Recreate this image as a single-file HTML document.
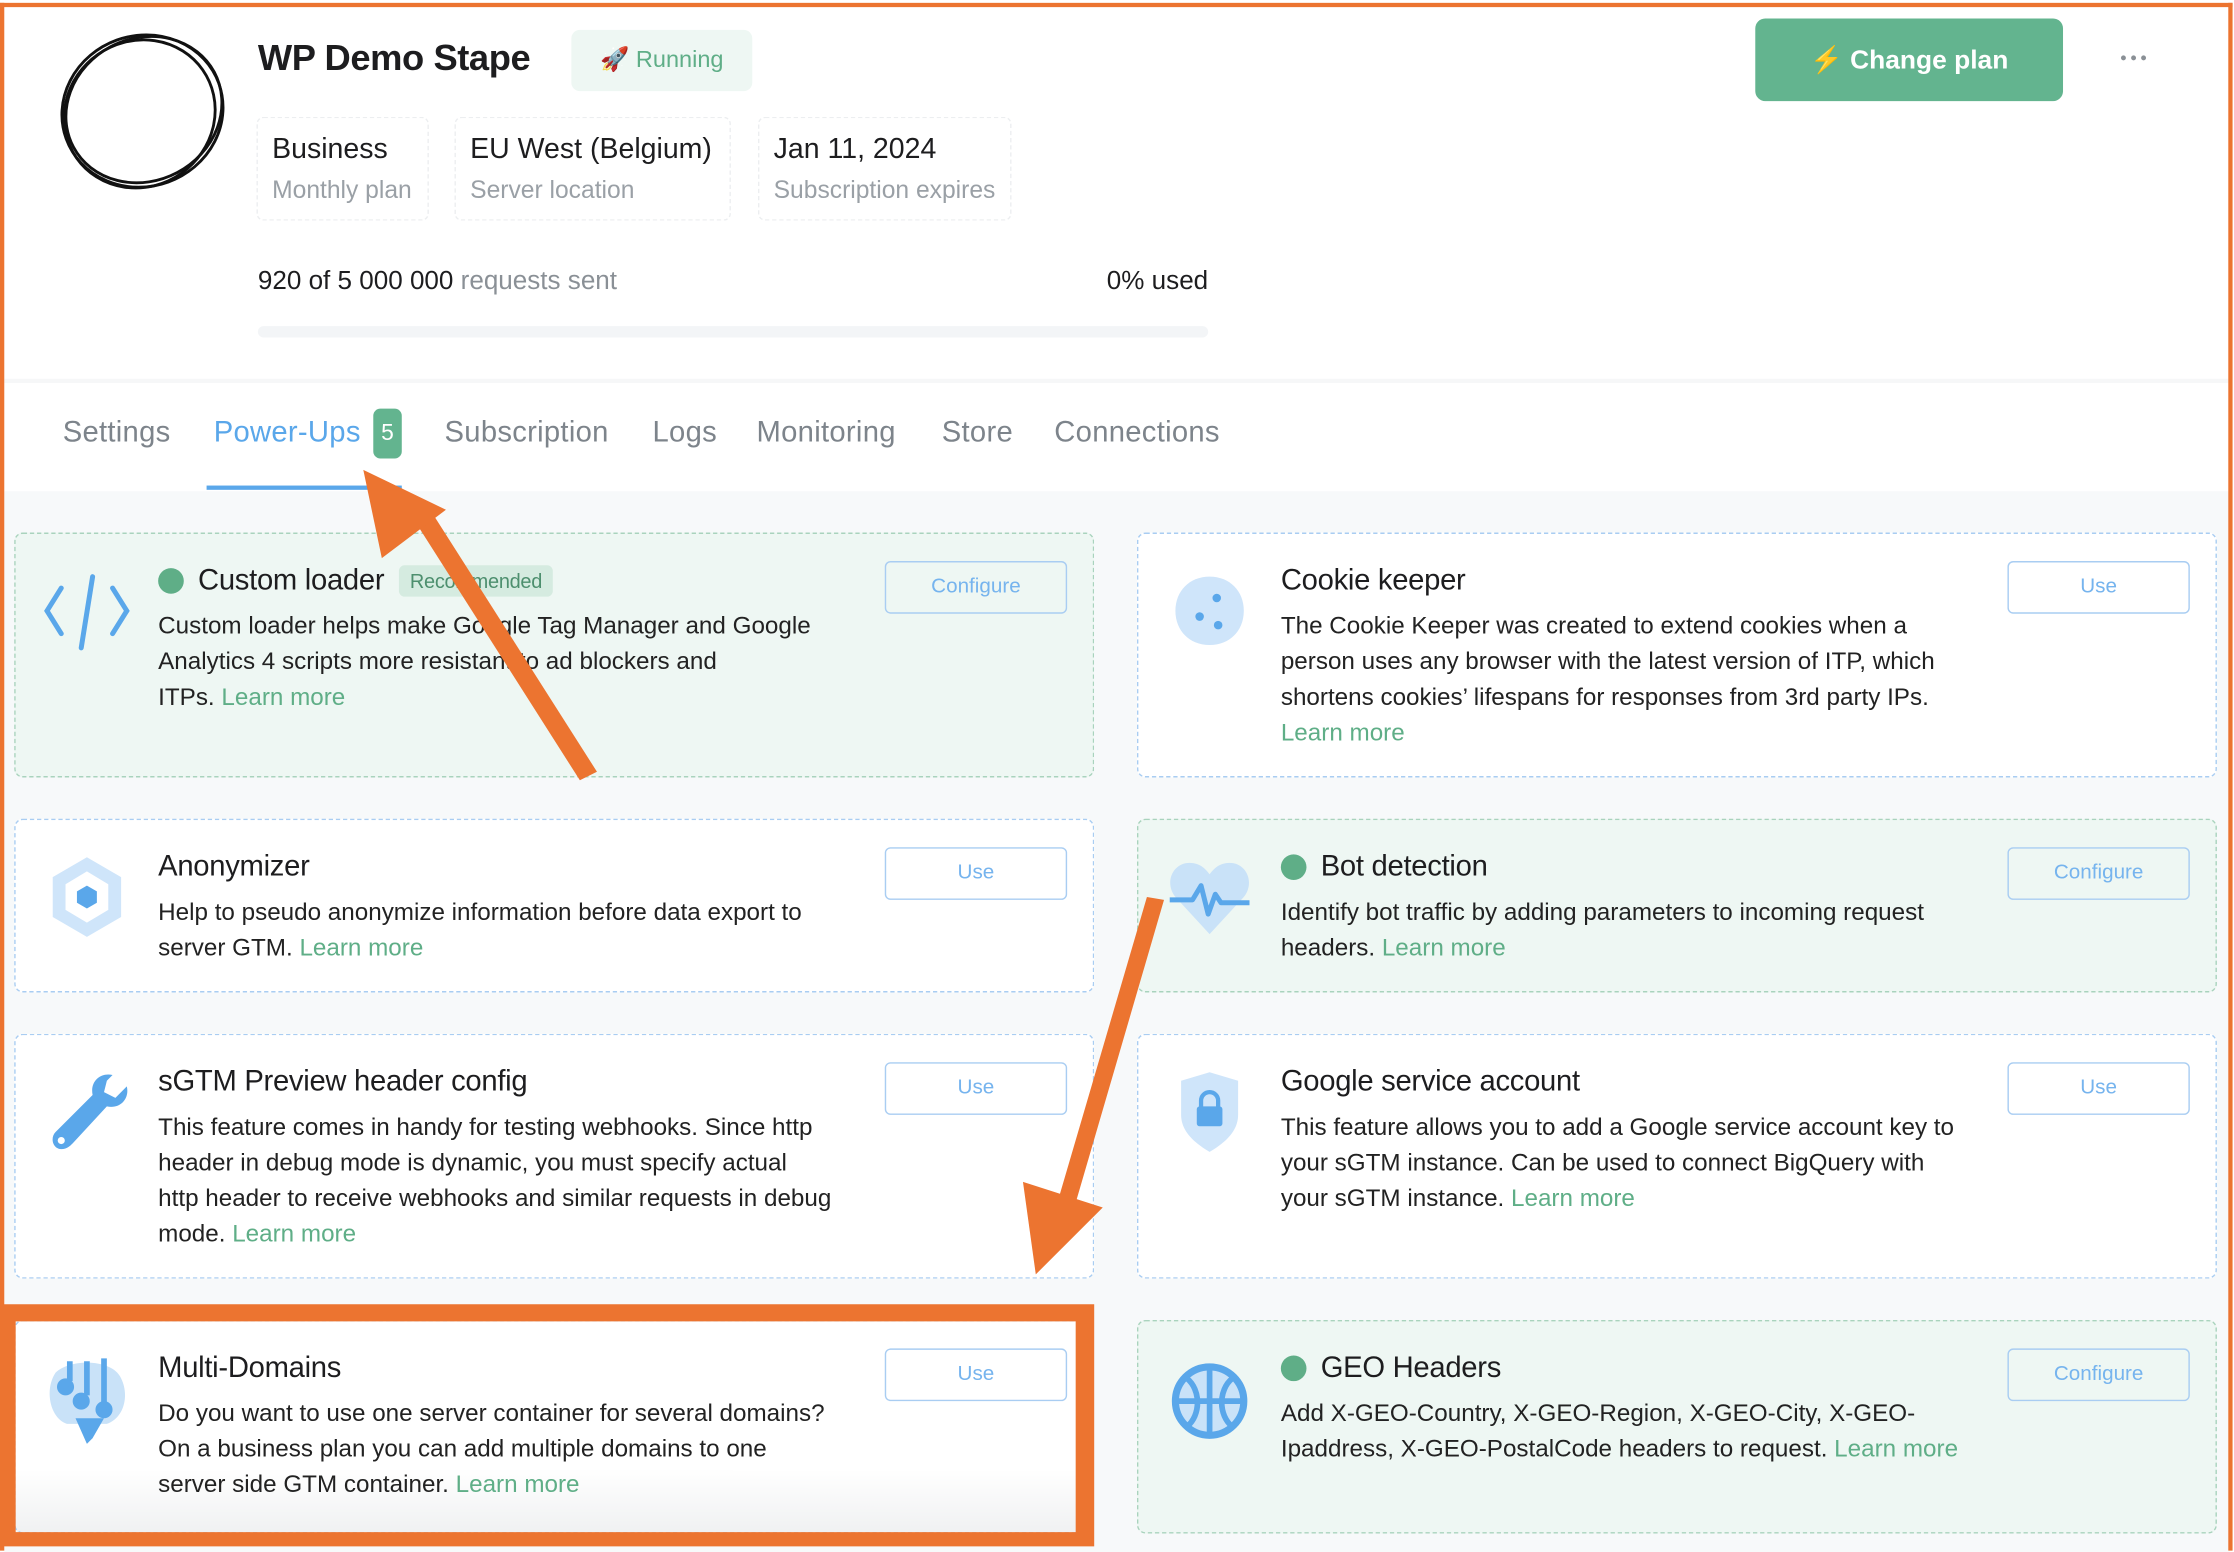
<!DOCTYPE html>
<html><head><meta charset="utf-8">
<style>
*{box-sizing:border-box;margin:0;padding:0}
html,body{width:2234px;height:1552px;overflow:hidden;background:#fff}
#w{position:absolute;left:0;top:0;width:1568px;height:1090px;transform:scale(1.42474,1.4239);transform-origin:0 0;font-family:"Liberation Sans",sans-serif;color:#1d1d1f;background:#fff}
.a{position:absolute}
.frame{position:absolute;left:0;top:2px;width:1567px;height:1087px;border:3px solid #ec7430;border-bottom:none;pointer-events:none}
.title{left:181px;top:27px;font-size:25.5px;font-weight:bold;letter-spacing:-0.3px}
.run{left:401px;top:21px;width:127px;height:43px;background:#eef7f3;border-radius:6px;color:#5fae87;font-size:16.5px;line-height:43px;text-align:center}
.ib{top:82px;height:73px;border:1px dashed #eceef0;border-radius:5px;padding:11px 10px}
.ib b{display:block;font-size:20px;font-weight:normal;color:#1d1d1f}
.ib span{display:block;font-size:17.3px;color:#9aa0a6;margin-top:6px}
.req{left:181px;top:186px;font-size:18.3px}
.req span{color:#8a9096}
.used{left:700px;width:148px;text-align:right;top:186px;font-size:18.3px}
.bar{left:181px;top:229px;width:667px;height:8px;background:#f3f5f7;border-radius:4px}
.cp{left:1232px;top:13px;width:216px;height:58px;background:#63b48f;border-radius:7px;color:#fff;font-weight:bold;font-size:18.5px;line-height:58px;text-align:center}
.dots{left:1488px;top:36px;font-size:8px;color:#8a9096;letter-spacing:0px}
.sep{left:3px;top:266px;width:1562px;height:3px;background:#f6f7f8}
.tab{top:292px;font-size:20.5px;color:#7d848b;letter-spacing:0.2px}
.badge{left:262px;top:287px;width:20px;height:35px;background:#63b48f;border-radius:5px;color:#fff;font-size:16px;text-align:center;line-height:35px}
.ul{left:145px;top:341px;width:137px;height:3px;background:#5aa7ea}
.content{left:3px;top:345px;width:1562px;height:745px;background:#f7f9fa}
.card{position:absolute;width:758px;border-radius:6px;border:1px dashed #a9cdf2;background:#fff}
.card.g{background:#eef7f3;border-color:#a9d3bd}
.card .ic{position:absolute;left:18px;top:22px;width:64px;height:64px}
.card h3{position:absolute;left:100px;top:21px;height:24px;font-size:20.5px;font-weight:normal;display:flex;align-items:center;white-space:nowrap;letter-spacing:-0.2px}
.dot{display:inline-block;width:18px;height:18px;border-radius:50%;background:#5fae87;margin-right:10px}
.rec{display:inline-block;background:#d5ebe0;color:#4d8f6e;font-size:14px;padding:3px 8px;border-radius:4px;margin-left:10px}
.card p{position:absolute;left:100px;top:52px;width:485px;font-size:17px;line-height:25px;color:#222}
.card p i{font-style:normal;color:#5fae87;white-space:nowrap}
.btn{position:absolute;left:610px;top:19px;width:128px;height:37px;border:1.5px solid #a9cdf2;border-radius:4px;color:#76b4ee;font-size:14.5px;text-align:center;line-height:34px;background:transparent}
.obox{position:absolute;left:2px;top:916px;width:766px;height:170px;border-style:solid;border-color:#ec7430;border-width:12px 13px 10px 9px}
</style></head><body><div id="w">
<svg class="a" style="left:38px;top:20px" width="124" height="118" viewBox="0 0 124 118"><g fill="none" stroke="#111" stroke-width="2"><ellipse cx="62" cy="58" rx="57" ry="53" transform="rotate(-20 62 58)"/><ellipse cx="60" cy="60" rx="54" ry="51" transform="rotate(-35 60 60)"/><ellipse cx="63" cy="57" rx="56" ry="50" transform="rotate(-28 63 57)"/></g></svg>
<div class="a title">WP Demo Stape</div>
<div class="a run">🚀 Running</div>
<div class="a ib" style="left:180px;width:121px"><b>Business</b><span>Monthly plan</span></div>
<div class="a ib" style="left:319px;width:194px"><b>EU West (Belgium)</b><span>Server location</span></div>
<div class="a ib" style="left:532px;width:178px"><b>Jan 11, 2024</b><span>Subscription expires</span></div>
<div class="a req">920 of 5 000 000 <span>requests sent</span></div>
<div class="a used">0% used</div>
<div class="a bar"></div>
<div class="a cp"><span style="color:#f2c94c">⚡</span> Change plan</div>
<div class="a dots">● ● ●</div>
<div class="a sep"></div>
<div class="a tab" style="left:44px">Settings</div>
<div class="a tab" style="left:150px;color:#5aa7ea">Power-Ups</div>
<div class="a badge">5</div>
<div class="a tab" style="left:312px">Subscription</div>
<div class="a tab" style="left:458px">Logs</div>
<div class="a tab" style="left:531px">Monitoring</div>
<div class="a tab" style="left:661px">Store</div>
<div class="a tab" style="left:740px">Connections</div>
<div class="a ul"></div>
<div class="a content"></div>

<div class="card g" style="left:10px;top:374px;height:172px">
<svg class="ic" viewBox="0 0 64 64"><g fill="none" stroke="#5aa7ea" stroke-width="3.5" stroke-linecap="round"><path d="M14 16 L4 32 L14 48"/><path d="M50 16 L60 32 L50 48"/><path d="M36 8 L28 58"/></g></svg>
<h3><span class="dot"></span>Custom loader<span class="rec">Recommended</span></h3>
<p>Custom loader helps make Google Tag Manager and Google Analytics 4 scripts more resistant to ad blockers and ITPs.&nbsp;<i>Learn more</i></p>
<div class="btn">Configure</div></div>

<div class="card" style="left:798px;top:374px;height:172px">
<svg class="ic" viewBox="0 0 64 64"><path d="M32 8 C46 8 56 18 56 32 C56 46 46 56 32 56 C18 56 8 46 8 32 C8 18 18 8 32 8Z" fill="#cfe5fa"/><circle cx="37" cy="23" r="3" fill="#5aa7ea"/><circle cx="25" cy="36" r="3" fill="#5aa7ea"/><circle cx="38" cy="42" r="3" fill="#5aa7ea"/></svg>
<h3>Cookie keeper</h3>
<p>The Cookie Keeper was created to extend cookies when a person uses any browser with the latest version of ITP, which shortens cookies’ lifespans for responses from 3rd party IPs. <i>Learn more</i></p>
<div class="btn">Use</div></div>

<div class="card" style="left:10px;top:575px;height:122px">
<svg class="ic" viewBox="0 0 64 64"><path d="M32 4 L56 18 L56 46 L32 60 L8 46 L8 18Z" fill="#cfe5fa"/><path d="M32 14 L47 23 L47 41 L32 50 L17 41 L17 23Z" fill="#fff"/><path d="M32 24 L39 28 L39 36 L32 40 L25 36 L25 28Z" fill="#5aa7ea"/></svg>
<h3>Anonymizer</h3>
<p>Help to pseudo anonymize information before data export to server GTM. <i>Learn more</i></p>
<div class="btn">Use</div></div>

<div class="card g" style="left:798px;top:575px;height:122px">
<svg class="ic" viewBox="0 0 64 64"><path d="M32 58 L8 32 C0 22 6 8 18 8 C25 8 29 12 32 16 C35 12 39 8 46 8 C58 8 64 22 56 32Z" fill="#c9e2f8"/><path d="M4 34 H20 L26 24 L31 44 L36 30 L40 36 H60" fill="none" stroke="#5aa7ea" stroke-width="3.5" stroke-linejoin="round"/></svg>
<h3><span class="dot"></span>Bot detection</h3>
<p>Identify bot traffic by adding parameters to incoming request headers. <i>Learn more</i></p>
<div class="btn">Configure</div></div>

<div class="card" style="left:10px;top:726px;height:172px">
<svg class="ic" viewBox="0 0 64 64"><path d="M50 6 C42 4 34 10 36 20 L10 46 C6 50 8 58 14 58 C18 58 20 56 22 54 L46 28 C56 30 62 22 60 14 L52 22 L44 18 L46 10Z" fill="#5aa7ea"/><circle cx="14" cy="52" r="2.5" fill="#fff"/></svg>
<h3>sGTM Preview header config</h3>
<p>This feature comes in handy for testing webhooks. Since http header in debug mode is dynamic, you must specify actual<br>http header to receive webhooks and similar requests in debug mode. <i>Learn more</i></p>
<div class="btn">Use</div></div>

<div class="card" style="left:798px;top:726px;height:172px">
<svg class="ic" viewBox="0 0 64 64"><path d="M32 4 L52 10 L52 34 C52 46 42 54 32 60 C22 54 12 46 12 34 L12 10Z" fill="#cfe5fa"/><rect x="23" y="28" width="18" height="14" rx="2" fill="#5aa7ea"/><path d="M26 29 V24 A6 6 0 0 1 38 24 V29" fill="none" stroke="#5aa7ea" stroke-width="3"/></svg>
<h3>Google service account</h3>
<p>This feature allows you to add a Google service account key to your sGTM instance. Can be used to connect BigQuery with your sGTM instance. <i>Learn more</i></p>
<div class="btn">Use</div></div>

<div class="card" style="left:10px;top:927px;height:150px;background:linear-gradient(#fff 70%,#f0f1f2)">
<svg class="ic" viewBox="0 0 64 64"><path d="M10 14 C20 4 50 4 56 18 C62 30 58 46 46 50 L18 50 C6 46 2 26 10 14Z" fill="#c9e2f8"/><path d="M24 46 H44 L36 60 L32 64Z" fill="#5aa7ea"/><g stroke="#5aa7ea" stroke-width="4" fill="#5aa7ea"><path d="M20 6 V20"/><circle cx="17" cy="24" r="4"/><path d="M32 6 V30"/><circle cx="28" cy="34" r="4"/><path d="M44 4 V36"/><circle cx="44" cy="40" r="4"/></g></svg>
<h3>Multi-Domains</h3>
<p>Do you want to use one server container for several domains? On a business plan you can add multiple domains to one<br>server side GTM container. <i>Learn more</i></p>
<div class="btn">Use</div></div>

<div class="card g" style="left:798px;top:927px;height:150px">
<svg class="ic" viewBox="0 0 64 64"><circle cx="32" cy="34" r="24" fill="#c9e2f8" stroke="#5aa7ea" stroke-width="5"/><path d="M32 10 V58 M8 34 H56 M16 18 C26 26 26 44 16 52 M48 18 C38 26 38 44 48 52" fill="none" stroke="#5aa7ea" stroke-width="4"/></svg>
<h3><span class="dot"></span>GEO Headers</h3>
<p>Add X-GEO-Country, X-GEO-Region, X-GEO-City, X-GEO-Ipaddress, X-GEO-PostalCode headers to request. <i>Learn more</i></p>
<div class="btn">Configure</div></div>

<div class="obox"></div>
<svg class="a" style="left:0;top:0" width="1568" height="1090">
<g fill="#ec7430">
<polygon points="407,548 419,542 300,355 288,361"/>
<polygon points="255,330 313,358 268,392"/>
<polygon points="805,630 817,632 752,855 740,852"/>
<polygon points="727,895 718,830 774,848"/>
</g></svg>
<div class="frame"></div>
</div></body></html>
